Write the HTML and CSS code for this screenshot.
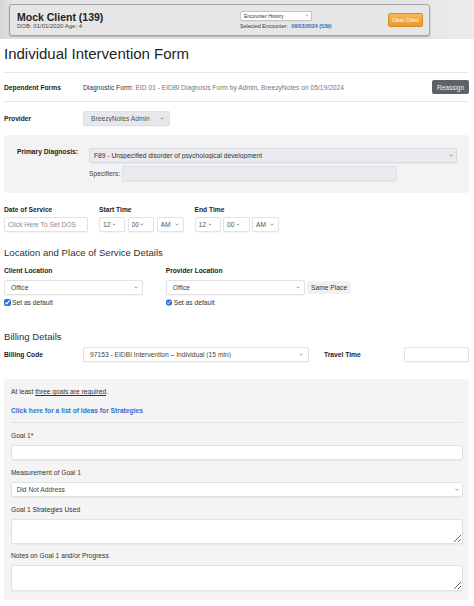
FILE: index.html
```html
<!DOCTYPE html>
<html lang="en">
  <head>
    <meta charset="UTF-8" />
    <meta name="viewport" content="width=device-width, initial-scale=1.0" />
    <title>Individual Intervention Form</title>
    <link rel="stylesheet" href="styles.css">
  </head>
  <body>
    <div class="topbar">
      <div class="client-box">
        <div class="client-info">
          <div class="client-name">Mock Client (139)</div>
          <div class="client-meta">DOB: 01/01/2020 Age: 4</div>
        </div>
        <div class="encounter">
          <span class="select select-encounter">
            <select><option>Encounter History</option></select>
            <svg class="chev" viewBox="0 0 10 6"><path d="M1.5 1.5 5 4.5 8.5 1.5" /></svg>
          </span>
          <div class="encounter-selected">Selected Encounter: <a href="#" class="encounter-link">06/03/2024 (539)</a></div>
        </div>
        <button class="btn-clear">Clear Client</button>
      </div>
    </div>

    <div class="page">
      <h1 class="page-title">Individual Intervention Form</h1>

      <div class="row row-dependent">
        <div class="row-label">Dependent Forms</div>
        <div class="dependent-value">Diagnostic Form: <span class="muted">EID 01 - EIDBI Diagnosis Form by Admin, BreezyNotes on 05/19/2024</span></div>
        <button class="btn-reassign">Reassign</button>
      </div>

      <div class="row row-provider">
        <div class="row-label">Provider</div>
        <span class="select select-provider">
          <select><option>BreezyNotes Admin</option></select>
          <svg class="chev" viewBox="0 0 10 6"><path d="M1.5 1.5 5 4.5 8.5 1.5" /></svg>
        </span>
      </div>

      <div class="panel diagnosis">
        <div class="diagnosis-label">Primary Diagnosis:</div>
        <div class="diagnosis-fields">
          <span class="select select-diagnosis">
            <select><option>F89 - Unspecified disorder of psychological development</option></select>
            <svg class="chev" viewBox="0 0 10 6"><path d="M1.5 1.5 5 4.5 8.5 1.5" /></svg>
          </span>
          <div class="specifiers">
            <label class="specifiers-label">Specifiers:</label>
            <input class="input input-disabled" type="text" disabled />
          </div>
        </div>
      </div>

      <div class="time-row">
        <div class="time-group">
          <div class="field-label">Date of Service</div>
          <input class="input input-date" type="text" placeholder="Click Here To Set DOS" />
        </div>
        <div class="time-group">
          <div class="field-label">Start Time</div>
          <div class="time-selects">
            <span class="select select-hour">
              <select><option>12</option></select>
              <svg class="chev" viewBox="0 0 10 6"><path d="M1.5 1.5 5 4.5 8.5 1.5" /></svg>
            </span>
            <span class="select select-minute">
              <select><option>00</option></select>
              <svg class="chev" viewBox="0 0 10 6"><path d="M1.5 1.5 5 4.5 8.5 1.5" /></svg>
            </span>
            <span class="select select-ampm">
              <select><option>AM</option></select>
              <svg class="chev" viewBox="0 0 10 6"><path d="M1.5 1.5 5 4.5 8.5 1.5" /></svg>
            </span>
          </div>
        </div>
        <div class="time-group">
          <div class="field-label">End Time</div>
          <div class="time-selects">
            <span class="select select-hour">
              <select><option>12</option></select>
              <svg class="chev" viewBox="0 0 10 6"><path d="M1.5 1.5 5 4.5 8.5 1.5" /></svg>
            </span>
            <span class="select select-minute">
              <select><option>00</option></select>
              <svg class="chev" viewBox="0 0 10 6"><path d="M1.5 1.5 5 4.5 8.5 1.5" /></svg>
            </span>
            <span class="select select-ampm">
              <select><option>AM</option></select>
              <svg class="chev" viewBox="0 0 10 6"><path d="M1.5 1.5 5 4.5 8.5 1.5" /></svg>
            </span>
          </div>
        </div>
      </div>

      <h2 class="section-title section-location">Location and Place of Service Details</h2>
      <div class="location-row">
        <div class="location-col">
          <div class="field-label location-label">Client Location</div>
          <span class="select select-location">
            <select><option>Office</option></select>
            <svg class="chev" viewBox="0 0 10 6"><path d="M1.5 1.5 5 4.5 8.5 1.5" /></svg>
          </span>
          <label class="check"><input type="checkbox" checked /> Set as default</label>
        </div>
        <div class="location-col">
          <div class="field-label location-label">Provider Location</div>
          <div class="location-pair">
            <span class="select select-location">
              <select><option>Office</option></select>
              <svg class="chev" viewBox="0 0 10 6"><path d="M1.5 1.5 5 4.5 8.5 1.5" /></svg>
            </span>
            <button class="btn-same">Same Place</button>
          </div>
          <label class="check"><input type="checkbox" checked /> Set as default</label>
        </div>
      </div>

      <h2 class="section-title section-billing">Billing Details</h2>
      <div class="billing-row">
        <div class="row-label">Billing Code</div>
        <span class="select select-billing">
          <select><option>97153 - EIDBI Intervention – Individual (15 min)</option></select>
          <svg class="chev" viewBox="0 0 10 6"><path d="M1.5 1.5 5 4.5 8.5 1.5" /></svg>
        </span>
        <div class="row-label travel-label">Travel Time</div>
        <input class="input input-travel" type="text" />
      </div>

      <div class="panel goals">
        <div class="goals-note">At least <u>three goals are required</u>.</div>
        <a href="#" class="goals-link">Click here for a list of Ideas for Strategies</a>
        <div class="goals-sep"></div>

        <div class="goal-field">
          <label class="goal-label">Goal 1*</label>
          <input class="input input-goal" type="text" />
        </div>
        <div class="goal-field">
          <label class="goal-label">Measurement of Goal 1</label>
          <span class="select select-goal">
            <select><option>Did Not Address</option></select>
            <svg class="chev" viewBox="0 0 10 6"><path d="M1.5 1.5 5 4.5 8.5 1.5" /></svg>
          </span>
        </div>
        <div class="goal-field">
          <label class="goal-label">Goal 1 Strategies Used</label>
          <textarea class="input textarea-goal"></textarea>
        </div>
        <div class="goal-field">
          <label class="goal-label">Notes on Goal 1 and/or Progress</label>
          <textarea class="input textarea-goal textarea-notes"></textarea>
        </div>
      </div>
    </div>
  </body>
</html>
```

FILE: styles.css
```css
body {
  margin: 0;
  font-family: "Liberation Sans", Arial, sans-serif;
  font-size: 6.7px;
  color: #333;
  background: #fff;
}

/* client bar */
.topbar {
  height: 39px;
  box-sizing: border-box;
  padding: 4px 44px 0 9px;
  background: linear-gradient(to right, #d6d6d6, #e6e6e6 3%, #e6e6e6 88%, #ececec);
}
.client-box {
  display: flex;
  align-items: center;
  height: 32px;
  box-sizing: border-box;
  padding: 0 6px 0 7px;
  border: 1px solid #a4a4a4;
  border-radius: 3px;
  background: #e6e6e6;
  box-shadow: 0 1px 2px rgba(0, 0, 0, 0.25);
}
.client-info {
  width: 223px;
}
.client-name {
  font-size: 10.5px;
  font-weight: bold;
  line-height: 12px;
  color: #222;
}
.client-meta {
  font-size: 6px;
  line-height: 7px;
  color: #444;
}
.encounter {
  flex: 1;
  display: flex;
  flex-direction: column;
  gap: 2px;
}
.encounter-selected {
  font-size: 5.3px;
  line-height: 7px;
  color: #333;
}
.encounter-link {
  color: #2d6cb5;
  font-weight: bold;
  text-decoration: none;
  margin-left: 2px;
}
.btn-clear {
  width: 35px;
  height: 14px;
  padding: 0;
  border: 1px solid #d9892a;
  border-radius: 2px;
  background: linear-gradient(to bottom, #f6bb55, #e9962c);
  color: #fff;
  font-family: inherit;
  font-size: 5.2px;
}

/* page */
.page {
  padding: 0 5px 0 4px;
}
.page-title {
  margin: 6px 0 0;
  font-size: 15px;
  line-height: 18px;
  font-weight: normal;
  color: #222;
}
.row {
  display: flex;
  align-items: center;
}
.row-label {
  width: 79px;
  flex-shrink: 0;
  font-weight: bold;
  color: #222;
}
.row-dependent {
  margin-top: 9px;
  padding: 7px 0;
  border-top: 1px solid #e9e9e9;
  border-bottom: 1px solid #e9e9e9;
}
.dependent-value {
  flex: 1;
}
.muted {
  color: #777;
}
.btn-reassign {
  width: 37px;
  height: 14px;
  padding: 0;
  border: none;
  border-radius: 2px;
  background: #5e6368;
  color: #f2f2f2;
  font-family: inherit;
  font-size: 6.5px;
}
.row-provider {
  margin-top: 9px;
}

/* controls */
.select {
  position: relative;
  display: inline-block;
  vertical-align: middle;
}
.select select {
  display: block;
  width: 100%;
  height: 15px;
  box-sizing: border-box;
  margin: 0;
  padding: 0 10px 0 5px;
  appearance: none;
  -webkit-appearance: none;
  border: 1px solid #e2e2e2;
  border-radius: 2px;
  background: #fff;
  box-shadow: 0 1px 1px rgba(0, 0, 0, 0.04);
  font-family: inherit;
  font-size: 6.7px;
  color: #444;
}
.chev {
  position: absolute;
  right: 5px;
  top: 50%;
  width: 4px;
  height: 3px;
  margin-top: -1.5px;
  fill: none;
  stroke: #555;
  stroke-width: 1.5;
  pointer-events: none;
}
.input {
  display: block;
  height: 15px;
  box-sizing: border-box;
  margin: 0;
  padding: 0 4px;
  border: 1px solid #e2e2e2;
  border-radius: 2px;
  background: #fff;
  box-shadow: 0 1px 1px rgba(0, 0, 0, 0.04);
  font-family: inherit;
  font-size: 6.7px;
  color: #444;
}
.input::placeholder {
  color: #8a8a8a;
}

.select-encounter {
  width: 72px;
}
.select-encounter select {
  height: 10px;
  padding-left: 3px;
  border-color: #c4c4c4;
  border-radius: 2px;
  font-size: 5px;
  color: #333;
}
.select-encounter .chev {
  right: 4px;
  width: 3.5px;
  height: 2.5px;
  margin-top: -1.25px;
  stroke: #777;
  stroke-width: 1.8;
}

.select-provider {
  width: 87px;
}
.select-provider select {
  padding-left: 7px;
  border-color: #dcdfe3;
  background: #e6e8eb;
  color: #555;
}
.select-provider .chev {
  right: 6px;
}

/* diagnosis panel */
.panel {
  border-radius: 3px;
  background: #f3f3f3;
}
.diagnosis {
  display: flex;
  align-items: flex-start;
  margin-top: 9px;
  padding: 13px 12px 12px 13px;
}
.diagnosis-label {
  width: 72px;
  flex-shrink: 0;
  line-height: 8px;
  font-weight: bold;
  color: #222;
}
.diagnosis-fields {
  flex: 1;
  display: flex;
  flex-direction: column;
  gap: 3px;
}
.select-diagnosis {
  display: block;
}
.select-diagnosis select {
  padding-left: 4px;
  border-color: #d7dade;
  background: #e9ebee;
  color: #333;
}
.select-diagnosis .chev {
  right: 4px;
}
.specifiers {
  display: flex;
  align-items: center;
}
.specifiers-label {
  width: 33px;
  color: #444;
}
.input-disabled {
  width: 275px;
  border-color: #dcdfe3;
  background: #e9ebee;
}

/* date and time */
.time-row {
  display: flex;
  gap: 11px;
  margin-top: 13px;
}
.field-label {
  line-height: 8px;
  margin-bottom: 3px;
  font-weight: bold;
  color: #222;
}
.input-date {
  width: 84px;
  padding-left: 3px;
}
.time-selects {
  display: flex;
  gap: 2.5px;
}
.select-hour {
  width: 26px;
}
.select-minute {
  width: 26.5px;
}
.select-ampm {
  width: 27px;
}
.select-hour select,
.select-minute select,
.select-ampm select {
  padding-left: 3px;
  color: #555;
}
.select-hour .chev {
  right: 9px;
}
.select-minute .chev {
  right: 10px;
}

/* location */
.section-title {
  margin: 0;
  font-size: 9.6px;
  line-height: 12px;
  font-weight: normal;
  color: #333;
}
.section-location {
  margin-top: 15px;
}
.location-row {
  display: flex;
  gap: 22.7px;
  margin-top: 8px;
}
.location-label {
  margin-bottom: 5px;
}
.select-location {
  display: block;
  width: 139px;
}
.select-location select {
  padding-left: 6px;
}
.location-pair {
  display: flex;
  align-items: center;
  gap: 2.4px;
}
.btn-same {
  width: 44px;
  height: 12.5px;
  padding: 0;
  border: none;
  border-radius: 2px;
  background: #f1f1f1;
  color: #333;
  font-family: inherit;
  font-size: 6.7px;
}
.check {
  display: flex;
  align-items: center;
  gap: 1.5px;
  margin-top: 3.7px;
  line-height: 8px;
  color: #333;
}
.check input {
  width: 6.5px;
  height: 6.5px;
  margin: 0;
  accent-color: #2c6fd6;
}

/* billing */
.section-billing {
  margin-top: 24px;
}
.billing-row {
  display: flex;
  align-items: center;
  margin-top: 4.6px;
}
.select-billing {
  width: 226px;
}
.select-billing select {
  padding-left: 6px;
}
.select-billing .chev {
  right: 6px;
}
.travel-label {
  width: 80px;
  margin-left: 15px;
}
.input-travel {
  width: 65px;
}

/* goals */
.goals {
  margin-top: 17px;
  padding: 9px 6px 9px 7px;
  background: #f4f4f4;
}
.goals-note {
  line-height: 8px;
  color: #333;
}
.goals-link {
  display: block;
  margin-top: 10.5px;
  line-height: 8px;
  font-weight: bold;
  color: #2f6fcf;
  text-decoration: none;
}
.goals-sep {
  margin-top: 7.3px;
  border-top: 1px solid #e3e3e3;
}
.goal-label {
  display: block;
  margin: 8.5px 0 5px;
  line-height: 8px;
  color: #333;
}
.input-goal {
  width: 100%;
  height: 15.5px;
}
.select-goal {
  display: block;
}
.select-goal select {
  height: 15.5px;
  padding-left: 4.5px;
}
.select-goal .chev {
  right: 4px;
}
.textarea-goal {
  width: 100%;
  height: 25px;
  resize: vertical;
}
.textarea-notes {
  height: 25.7px;
}
```
